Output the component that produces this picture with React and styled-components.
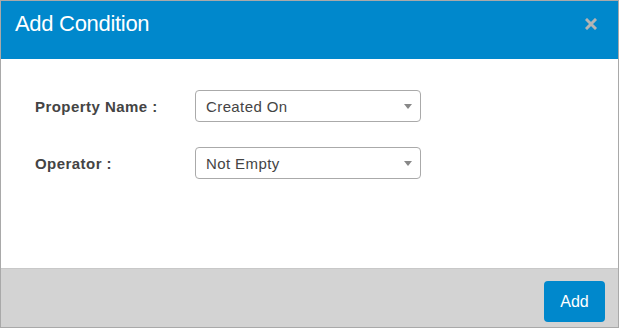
import React from 'react';
import styled, { createGlobalStyle } from 'styled-components';

const GlobalStyle = createGlobalStyle`
  html, body {
    margin: 0;
    padding: 0;
    background: #ffffff;
  }
  body {
    font-family: "Liberation Sans", Arial, sans-serif;
  }
`;

const Modal = styled.div`
  width: 619px;
  height: 328px;
  box-sizing: border-box;
  border: 1px solid #a9a9a9;
  display: flex;
  flex-direction: column;
  background: #fff;
`;

const Header = styled.div`
  height: 58px;
  background: #0088cc;
  display: flex;
  align-items: center;
  justify-content: space-between;
  padding: 0 21px 0 14px;
  box-sizing: border-box;
`;

const Title = styled.h3`
  margin: 0;
  margin-top: -12px;
  font-size: 22px;
  font-weight: normal;
  color: #ffffff;
  letter-spacing: -0.3px;
`;

const CloseButton = styled.button`
  border: none;
  background: none;
  padding: 0;
  margin-top: -12px;
  cursor: pointer;
  display: flex;
  align-items: center;
`;

const Body = styled.div`
  flex: 1;
  padding: 31px 34px 0;
  display: flex;
  flex-direction: column;
  gap: 25px;
`;

const Row = styled.div`
  display: flex;
  align-items: center;
`;

const Label = styled.label`
  width: 160px;
  font-size: 15px;
  font-weight: bold;
  letter-spacing: 0.45px;
  color: #444444;
`;

const SelectBox = styled.div`
  width: 226px;
  height: 32px;
  box-sizing: border-box;
  border: 1px solid #aaaaaa;
  border-radius: 4px;
  display: flex;
  align-items: center;
  justify-content: space-between;
  padding: 0 8px 0 10px;
  font-size: 15px;
  letter-spacing: 0.4px;
  color: #444444;
  cursor: pointer;
`;

const Arrow = styled.span`
  width: 0;
  height: 0;
  border-left: 4px solid transparent;
  border-right: 4px solid transparent;
  border-top: 5px solid #888888;
  margin-top: 1px;
`;

const Footer = styled.div`
  height: 59px;
  background: #d3d3d3;
  border-top: 1px solid #c8c8c8;
  display: flex;
  align-items: center;
  justify-content: flex-end;
  padding: 0 13px 0 0;
  box-sizing: border-box;
`;

const AddButton = styled.button`
  width: 61px;
  height: 41px;
  border: none;
  border-radius: 4px;
  background: #0088cc;
  color: #ffffff;
  font-family: "Liberation Sans", Arial, sans-serif;
  font-size: 16px;
  cursor: pointer;
  margin-top: 7px;
`;

const Select = ({ value }) => (
  <SelectBox>
    <span>{value}</span>
    <Arrow />
  </SelectBox>
);

export default function App() {
  return (
    <>
      <GlobalStyle />
      <Modal>
        <Header>
          <Title>Add Condition</Title>
          <CloseButton aria-label="Close">
            <svg width="12" height="12" viewBox="0 0 12 12">
              <path d="M2 2 L10 10 M10 2 L2 10" stroke="#b4b4b4" strokeWidth="3" strokeLinecap="square" />
            </svg>
          </CloseButton>
        </Header>
        <Body>
          <Row>
            <Label>Property Name :</Label>
            <Select value="Created On" />
          </Row>
          <Row>
            <Label>Operator :</Label>
            <Select value="Not Empty" />
          </Row>
        </Body>
        <Footer>
          <AddButton>Add</AddButton>
        </Footer>
      </Modal>
    </>
  );
}
